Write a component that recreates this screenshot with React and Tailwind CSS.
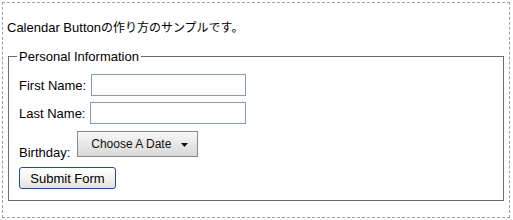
import React from 'react';

export default function App() {
  return (
    <div className="p-[2px] bg-white font-['Liberation_Sans',Arial,'Noto_Sans_CJK_JP',sans-serif] text-[13px] leading-[15px] text-black">
      <div className="w-[508px] h-[216px] border border-dashed border-[#a0a0a0] px-[4px] pt-[17px]">
        <p className="h-[15px]">
          Calendar Button<span className="text-[12px] leading-[15px]">の作り方のサンプルです。</span>
        </p>

        <fieldset className="mx-[1px] mt-[14px] border border-[#6a6a6a] pl-[8px] pr-[8px] pb-[11px] pt-[10px]">
          <legend className="px-[2px]">Personal Information</legend>

          <div className="flex flex-col pl-[2px]">
            <div className="flex items-center gap-[5px]">
              <label>First Name:</label>
              <input type="text" className="w-[155px] h-[22px] border border-[#7f9db9] bg-white outline-none" />
            </div>

            <div className="flex items-center gap-[5px] mt-[6px]">
              <label>Last Name:</label>
              <input type="text" className="w-[156px] h-[22px] border border-[#7f9db9] bg-white outline-none" />
            </div>

            <div className="flex items-end gap-[7px] mt-[7px]">
              <label className="mb-[-3px]">Birthday:</label>
              <button
                type="button"
                className="w-[121px] h-[26px] border border-[#8a8a8a] bg-gradient-to-b from-[#f8f8f8] to-[#d8d8d8] flex items-center justify-center gap-[10px] pl-[4px] text-[12px] text-[#111]"
              >
                <span>Choose A Date</span>
                <svg width="7" height="4" viewBox="0 0 7 4" className="mt-[1px]">
                  <path d="M0 0 H7 L3.5 4 Z" fill="#111" />
                </svg>
              </button>
            </div>

            <div className="mt-[10px]">
              <button
                type="submit"
                className="w-[97px] h-[22px] border border-[#1c4f8c] rounded-[3px] bg-gradient-to-b from-[#ffffff] via-[#f4f4f0] to-[#e2e2dc] text-[13px]"
              >
                Submit Form
              </button>
            </div>
          </div>
        </fieldset>
      </div>
    </div>
  );
}
